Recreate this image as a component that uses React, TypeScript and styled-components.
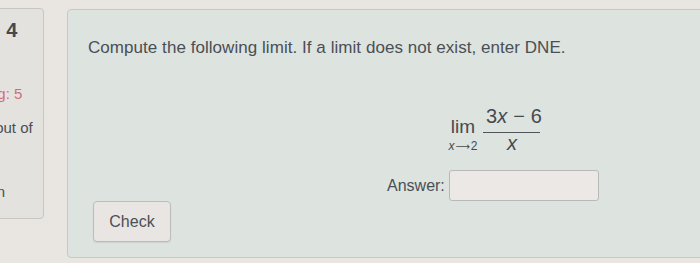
import React from "react";
import styled, { createGlobalStyle } from "styled-components";

const GlobalStyle = createGlobalStyle`
  html, body {
    margin: 0;
    padding: 0;
    background: #e9e6e2;
    overflow: hidden;
  }
  body {
    font-family: "Liberation Sans", Arial, sans-serif;
    color: #4a4f55;
  }
`;

const Page = styled.div`
  display: flex;
  align-items: flex-start;
  gap: 23px;
  height: 263px;
  padding-top: 8px;
  box-sizing: border-box;
`;

const InfoPanel = styled.div`
  flex: 0 0 auto;
  width: 160px;
  height: 211px;
  margin-left: -116px;
  box-sizing: border-box;
  background: #e4e2de;
  border: 1px solid #c8c6c2;
  border-radius: 4px;
  padding-top: 9px;
  overflow: hidden;
`;

const QuestionNo = styled.h3`
  margin: 0 0 0 29px;
  font-size: 20px;
  font-weight: 700;
  line-height: 24px;
  white-space: nowrap;
  color: #45494f;
`;

const InfoLine = styled.div<{ $indent: number; $gap: number; $alert?: boolean }>`
  margin-left: ${(p) => p.$indent}px;
  margin-top: ${(p) => p.$gap}px;
  font-size: 15px;
  line-height: 18px;
  white-space: nowrap;
  color: ${(p) => (p.$alert ? "#cf6f7a" : "#4a4f55")};
`;

const QuestionPanel = styled.div`
  flex: 1 1 auto;
  height: 249px;
  margin-top: 1px;
  margin-right: -20px;
  box-sizing: border-box;
  background: #dde3df;
  border: 1px solid #c4cac6;
  border-radius: 4px;
  padding: 28px 0 0 20px;
`;

const Prompt = styled.p`
  margin: 0;
  font-size: 17px;
  line-height: 20px;
  letter-spacing: 0.05px;
  color: #4a4f55;
`;

const MathRow = styled.div`
  display: flex;
  align-items: flex-start;
  margin: 47px 0 0 361px;
  color: #454a50;
`;

const LimCol = styled.div`
  display: flex;
  flex-direction: column;
  align-items: center;
  width: 28px;
  margin-right: 6px;
  padding-top: 12px;
`;

const LimWord = styled.span`
  font-size: 19px;
  line-height: 20px;
`;

const LimSub = styled.span`
  font-size: 12px;
  line-height: 14px;
  margin-top: 2px;
  white-space: nowrap;
`;

const Arrow = styled.span`
  font-family: "DejaVu Sans", sans-serif;
  font-size: 10px;
  margin: 0 1px;
`;

const Fraction = styled.div`
  display: flex;
  flex-direction: column;
  align-items: flex-start;
`;

const Numer = styled.span`
  font-size: 20px;
  line-height: 22px;
  margin-left: 3px;
  white-space: nowrap;
`;

const Denom = styled.span`
  font-size: 20px;
  line-height: 22px;
  margin: -1px 0 0 24px;
`;

const Bar = styled.div`
  width: 57px;
  height: 1px;
  background: #50555b;
  margin-top: 5px;
`;

const Var = styled.i`
  font-style: italic;
`;

const Op = styled.span`
  margin: 0 6px;
`;

const AnswerRow = styled.div`
  display: flex;
  align-items: center;
  gap: 4px;
  margin: 16px 0 0 299px;
`;

const AnswerLabel = styled.label`
  font-size: 16px;
  color: #4a4f55;
`;

const AnswerInput = styled.input`
  width: 150px;
  height: 31px;
  box-sizing: border-box;
  background: #ece8e5;
  border: 1px solid #b7b9b8;
  border-radius: 3px;
  outline: none;
`;

const CheckButton = styled.button`
  display: block;
  margin: 0 0 0 5px;
  width: 78px;
  height: 41px;
  box-sizing: border-box;
  background: #e9e5e2;
  border: 1px solid #bcbcba;
  border-radius: 4px;
  font-family: "Liberation Sans", Arial, sans-serif;
  font-size: 16px;
  color: #4a4f55;
  box-shadow: 0 1px 1px rgba(0, 0, 0, 0.08);
`;

export default function App() {
  return (
    <>
      <GlobalStyle />
      <Page>
        <InfoPanel>
          <QuestionNo>Question 4</QuestionNo>
          <InfoLine $indent={49} $gap={43} $alert>
            Remaining: 5
          </InfoLine>
          <InfoLine $indent={56} $gap={16}>
            Marked out of
          </InfoLine>
          <InfoLine $indent={30} $gap={46}>
            Flag question
          </InfoLine>
        </InfoPanel>
        <QuestionPanel>
          <Prompt>
            Compute the following limit. If a limit does not exist, enter DNE.
          </Prompt>
          <MathRow>
            <LimCol>
              <LimWord>lim</LimWord>
              <LimSub>
                <Var>x</Var>
                <Arrow>⟶</Arrow>2
              </LimSub>
            </LimCol>
            <Fraction>
              <Numer>
                3<Var>x</Var>
                <Op>−</Op>6
              </Numer>
              <Bar />
              <Denom>
                <Var>x</Var>
              </Denom>
            </Fraction>
          </MathRow>
          <AnswerRow>
            <AnswerLabel htmlFor="answer">Answer:</AnswerLabel>
            <AnswerInput id="answer" type="text" />
          </AnswerRow>
          <CheckButton>Check</CheckButton>
        </QuestionPanel>
      </Page>
    </>
  );
}
